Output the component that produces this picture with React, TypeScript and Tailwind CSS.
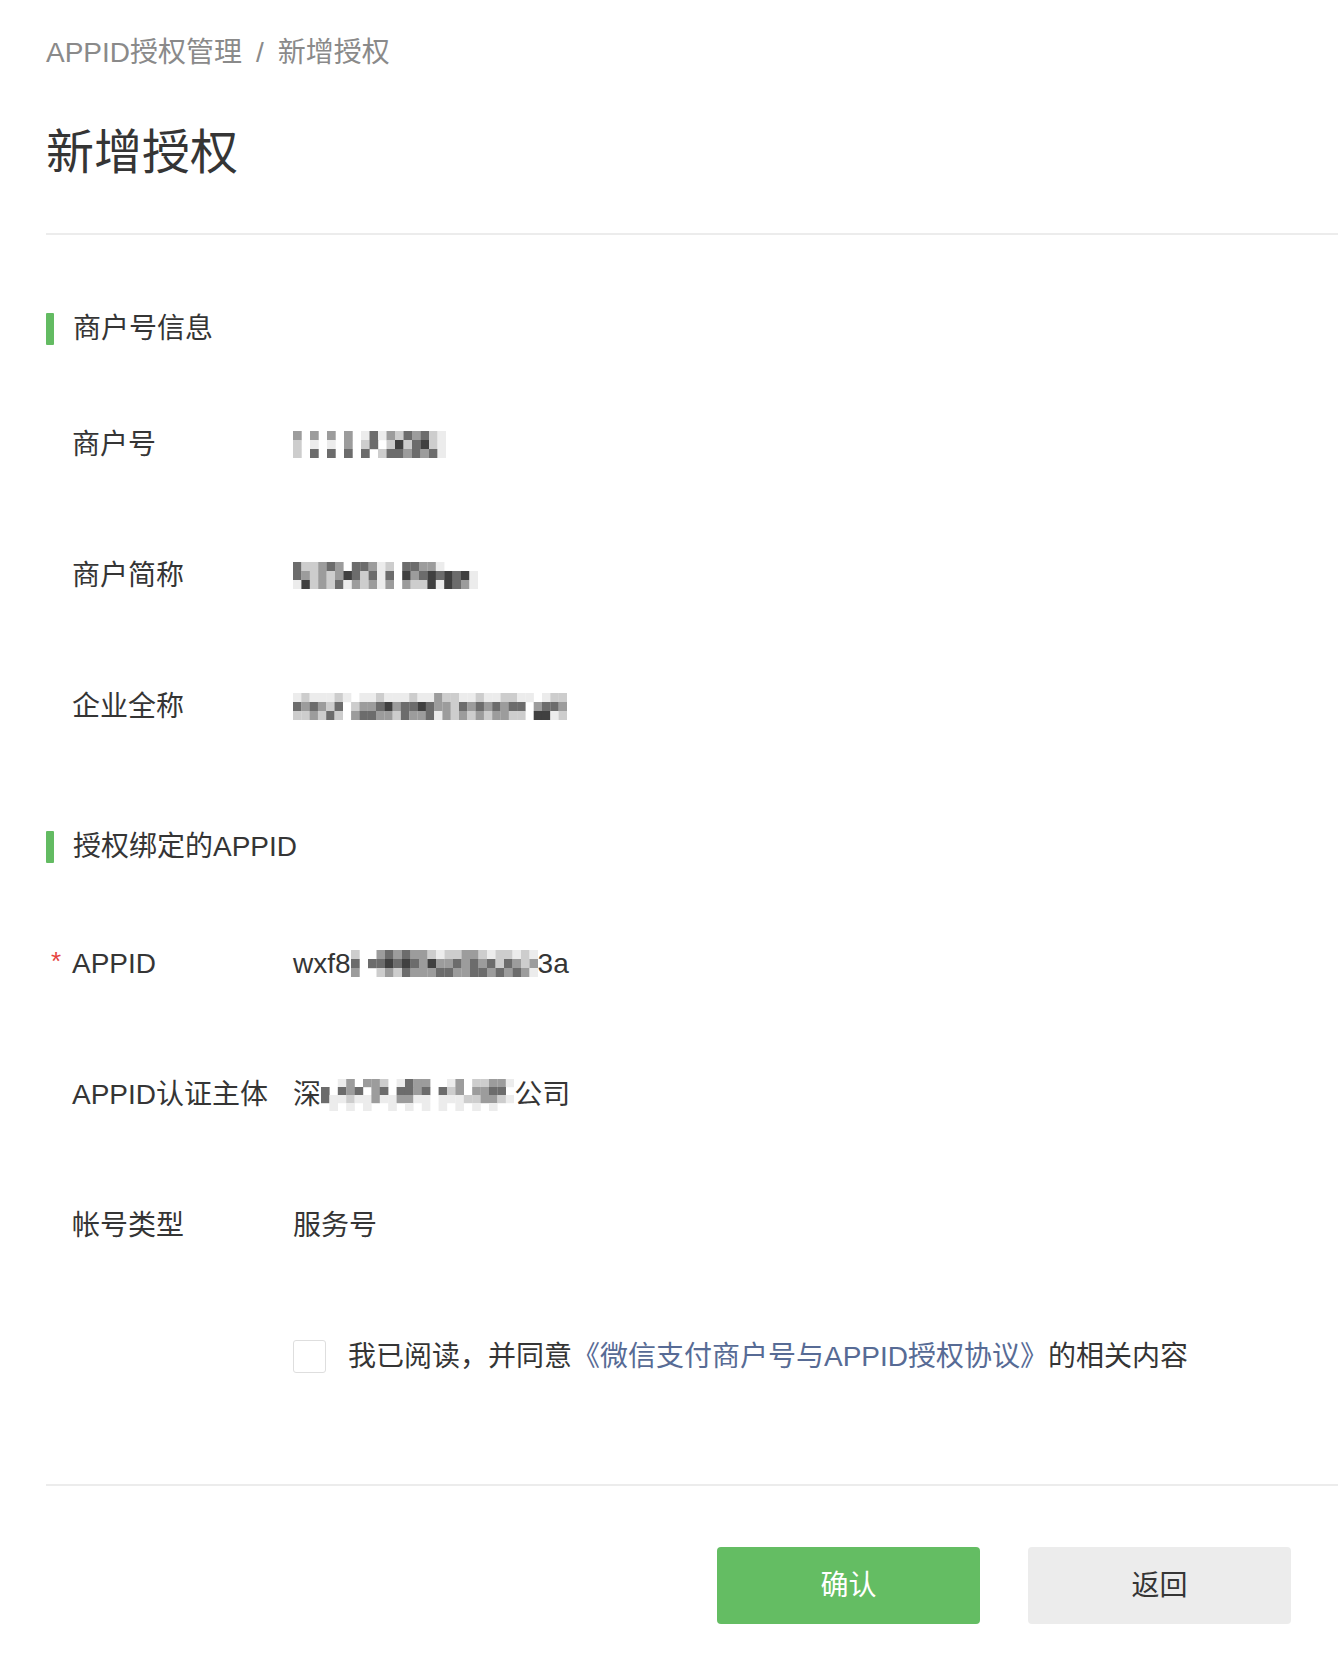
import React from "react";

const SHADES: Record<string, string> = {
  "0": "transparent",
  "1": "#ececec",
  "2": "#cdcdcd",
  "3": "#9c9c9c",
  "4": "#6c6c6c",
  "5": "#404040",
};

function Mosaic({ rows, cw, ch }: { rows: string[]; cw: number; ch: number }) {
  const w = rows[0].length * cw;
  const h = rows.length * ch;
  return (
    <svg width={w} height={h} viewBox={`0 0 ${w} ${h}`} className="block shrink-0">
      {rows.map((r, y) =>
        r.split("").map((c, x) =>
          c === "0" ? null : (
            <rect key={`${x}-${y}`} x={x * cw} y={y * ch} width={cw + 0.2} height={ch + 0.2} fill={SHADES[c]} />
          )
        )
      )}
    </svg>
  );
}

function SectionHeader({ children }: { children: React.ReactNode }) {
  return (
    <div className="flex items-center h-[32px]">
      <div className="w-[8px] h-[32px] bg-[#63bb62] rounded-[1px]" />
      <div className="ml-[19px] text-[28px] leading-[32px] text-[#353535]">{children}</div>
    </div>
  );
}

function Row({ label, required, children }: { label: string; required?: boolean; children: React.ReactNode }) {
  return (
    <div className="flex items-center h-[131px] pl-[26px]">
      <div className="w-[221px] shrink-0 flex items-center text-[28px] leading-[40px] text-[#353535]">
        {required ? <span className="-ml-[21px] w-[21px] text-[#e64340] text-[26px] leading-[40px] -translate-y-[3px]">*</span> : null}
        <span>{label}</span>
      </div>
      <div className="flex items-center text-[28px] leading-[40px] text-[#353535]">{children}</div>
    </div>
  );
}

export default function App() {
  return (
    <div
      className="min-h-[1656px] w-full bg-white pl-[46px] pt-[35px]"
      style={{ fontFamily: '"Liberation Sans", "Noto Sans CJK SC", sans-serif' }}
    >
      <div className="h-[36px] text-[28px] leading-[36px] text-[#8a8a8a] flex items-center">
        <span>APPID授权管理</span>
        <span className="mx-[14px]">/</span>
        <span>新增授权</span>
      </div>
      <h1 className="mt-[52px] h-[60px] text-[48px] leading-[60px] font-normal text-[#353535]">新增授权</h1>
      <div className="mt-[50px] h-[2px] bg-[#ececec]" />

      <div className="mt-[78px]">
        <SectionHeader>商户号信息</SectionHeader>
      </div>
      <div className="mt-[34px]">
        <Row label="商户号">
          <Mosaic cw={8.5} ch={9} rows={["303030301413243421", "201010302402524521", "204040404024434341"]} />
        </Row>
        <Row label="商户简称">
          <Mosaic
            cw={8.4}
            ch={9}
            rows={["4223430443120443310000", "4323235424140534545451", "1523241323130322515431"]}
          />
        </Row>
        <Row label="企业全称">
          <Mosaic
            cw={8.3}
            ch={9}
            rows={[
              "121112101121112113221121122110122",
              "434324023345344543324343434403443",
              "223242034433243341323232332205512",
            ]}
          />
        </Row>
      </div>

      <div className="mt-[59px]">
        <SectionHeader>授权绑定的APPID</SectionHeader>
      </div>
      <div className="mt-[35px]">
        <Row label="APPID" required>
          <span>wxf8</span>
          <Mosaic cw={8.5} ch={9} rows={["2003434332122332122121", "4044545435334343424323", "3002324333443344343431"]} />
          <span>3a</span>
        </Row>
        <Row label="APPID认证主体">
          <span>深</span>
          <Mosaic
            cw={8.4}
            ch={8}
            rows={[
              "00130332014330013022331",
              "40434034044340423033440",
              "41121131133110111223321",
              "01010100101010101010100",
            ]}
          />
          <span>公司</span>
        </Row>
        <Row label="帐号类型">
          <span>服务号</span>
        </Row>
        <div className="flex items-center h-[131px] pl-[247px]">
          <div className="w-[33px] h-[33px] shrink-0 border border-[#dedede] rounded-[3px] bg-white" />
          <div className="ml-[22px] text-[28px] leading-[40px] text-[#353535] whitespace-nowrap">
            我已阅读，并同意<span className="text-[#576b95]">《微信支付商户号与APPID授权协议》</span>的相关内容
          </div>
        </div>
      </div>

      <div className="mt-[62px] h-[2px] bg-[#ececec]" />

      <div className="mt-[61px] flex justify-end gap-[48px] pr-[47px]">
        <button className="w-[263px] h-[77px] rounded-[4px] bg-[#64bd63] text-white text-[28px]">确认</button>
        <button className="w-[263px] h-[77px] rounded-[4px] bg-[#ececec] text-[#353535] text-[28px]">返回</button>
      </div>
    </div>
  );
}
